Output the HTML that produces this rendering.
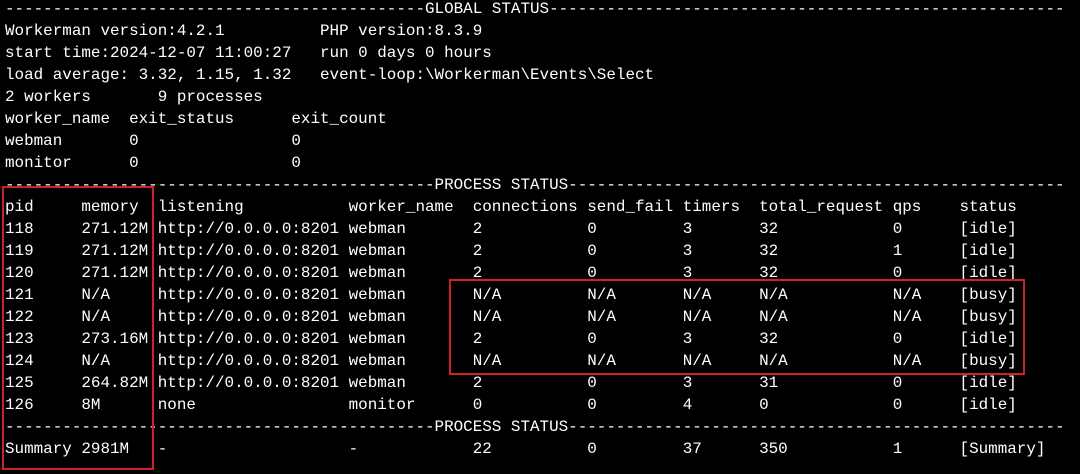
<!DOCTYPE html>
<html><head><meta charset="utf-8"><style>
html,body{margin:0;padding:0;background:#000;width:1080px;height:474px;overflow:hidden}
pre{position:absolute;left:5px;top:-2px;margin:0;font-family:"Liberation Mono",monospace;font-size:15.92px;line-height:22px;color:#fff;white-space:pre}
.box{position:absolute;border:2px solid #d0202a}
</style></head><body>
<pre>--------------------------------------------GLOBAL STATUS------------------------------------------------------
Workerman version:4.2.1          PHP version:8.3.9
start time:2024-12-07 11:00:27   run 0 days 0 hours
load average: 3.32, 1.15, 1.32   event-loop:\Workerman\Events\Select
2 workers       9 processes
worker_name  exit_status      exit_count
webman       0                0
monitor      0                0
---------------------------------------------PROCESS STATUS----------------------------------------------------
pid     memory  listening           worker_name  connections send_fail timers  total_request qps    status
118     271.12M http://0.0.0.0:8201 webman       2           0         3       32            0      [idle]
119     271.12M http://0.0.0.0:8201 webman       2           0         3       32            1      [idle]
120     271.12M http://0.0.0.0:8201 webman       2           0         3       32            0      [idle]
121     N/A     http://0.0.0.0:8201 webman       N/A         N/A       N/A     N/A           N/A    [busy]
122     N/A     http://0.0.0.0:8201 webman       N/A         N/A       N/A     N/A           N/A    [busy]
123     273.16M http://0.0.0.0:8201 webman       2           0         3       32            0      [idle]
124     N/A     http://0.0.0.0:8201 webman       N/A         N/A       N/A     N/A           N/A    [busy]
125     264.82M http://0.0.0.0:8201 webman       2           0         3       31            0      [idle]
126     8M      none                monitor      0           0         4       0             0      [idle]
---------------------------------------------PROCESS STATUS----------------------------------------------------
Summary 2981M   -                   -            22          0         37      350           1      [Summary]</pre>
<div class="box" style="left:2px;top:186px;width:148px;height:280px"></div>
<div class="box" style="left:449px;top:279px;width:572px;height:92px"></div>
</body></html>
